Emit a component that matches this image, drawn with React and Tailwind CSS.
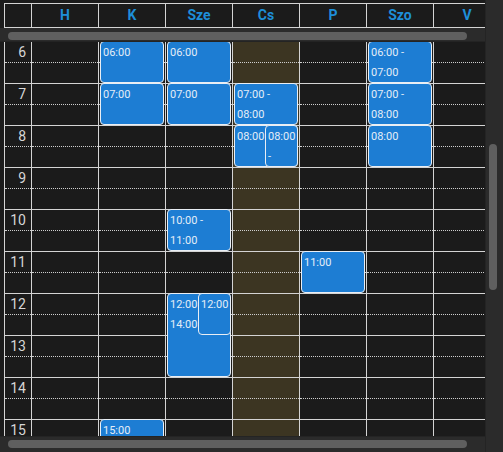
import React from "react";

const days = ["H", "K", "Sze", "Cs", "P", "Szo", "V"];
const hours = [6, 7, 8, 9, 10, 11, 12, 13, 14, 15];

const events = {
  1: [
    { start: 6, dur: 1, text: ["06:00"] },
    { start: 7, dur: 1, text: ["07:00"] },
    { start: 15, dur: 1, text: ["15:00"] },
  ],
  2: [
    { start: 6, dur: 1, text: ["06:00"] },
    { start: 7, dur: 1, text: ["07:00"] },
    { start: 10, dur: 1, text: ["10:00 -", "11:00"] },
    { start: 12, dur: 2, text: ["12:00 -", "14:00"] },
    { start: 12, dur: 1, text: ["12:00"], half: true },
  ],
  3: [
    { start: 7, dur: 1, text: ["07:00 -", "08:00"] },
    { start: 8, dur: 1, text: ["08:00 -"] },
    { start: 8, dur: 1, text: ["08:00", "-"], half: true },
  ],
  4: [{ start: 11, dur: 1, text: ["11:00"] }],
  5: [
    { start: 6, dur: 1, text: ["06:00 -", "07:00"] },
    { start: 7, dur: 1, text: ["07:00 -", "08:00"] },
    { start: 8, dur: 1, text: ["08:00"] },
  ],
};

function Event({ ev }) {
  const top = 42 * (ev.start - 6) - 1;
  const height = 42 * ev.dur;
  return (
    <div
      className={
        "absolute overflow-hidden rounded-[4px] border border-[#e9eef4] bg-[#1d7dd3] pl-[2px] pt-[1px] text-[11px] leading-[20px] text-[#e4edf7] " +
        (ev.half ? "left-[32px] w-[33px]" : "left-[1px] w-[64px]")
      }
      style={{ top, height }}
    >
      {ev.text.map((t, i) => (
        <div key={i} className="whitespace-nowrap">
          {t}
        </div>
      ))}
    </div>
  );
}

export default function App() {
  return (
    <div
      className="flex h-[452px] w-[503px] overflow-hidden bg-[#1b1b1b]"
      style={{ fontFamily: "Roboto, 'Liberation Sans', sans-serif" }}
    >
      <div className="flex w-[485px] shrink-0 flex-col overflow-hidden">
        {/* header */}
        <div className="mt-[3px] h-[25px] shrink-0 overflow-hidden">
          <div className="ml-[4px] flex h-[25px] w-[496px] border-y border-[#d4d4d4]">
            <div className="w-[27px] shrink-0 border-l border-[#d4d4d4]" />
            {days.map((d) => (
              <div
                key={d}
                className="flex w-[67px] shrink-0 items-center justify-center border-l border-[#d4d4d4] text-[14px] font-bold text-[#1e8ed8]"
              >
                {d}
              </div>
            ))}
          </div>
        </div>
        {/* top scroll track */}
        <div className="h-[14px] shrink-0 border-b border-[#242424] bg-[#2b2b2b] pl-[8px] pt-[4px]">
          <div className="h-[8px] w-[459px] rounded-full bg-[#5f5f5f]" />
        </div>
        {/* body */}
        <div className="h-[394px] shrink-0 overflow-hidden">
          <div className="ml-[4px] flex w-[496px]">
            <div className="w-[27px] shrink-0 border-l border-[#d4d4d4]">
              {hours.map((h) => (
                <div key={h} className="h-[42px] border-b border-[#d4d4d4]">
                  <div className="flex h-[21px] items-center justify-end border-b border-dotted border-[#cfcfcf] pr-[5px] text-[14px] text-[#d6d6d6]">
                    {h}
                  </div>
                </div>
              ))}
            </div>
            {days.map((d, di) => (
              <div
                key={d}
                className={
                  "relative w-[67px] shrink-0 border-l border-[#d4d4d4] " +
                  (di === 3 ? "bg-[#3c3522]" : "")
                }
              >
                {hours.map((h) => (
                  <div key={h} className="h-[42px] border-b border-[#d4d4d4]">
                    <div className="h-[21px] border-b border-dotted border-[#cfcfcf]" />
                  </div>
                ))}
                {(events[di] || []).map((ev, i) => (
                  <Event key={i} ev={ev} />
                ))}
              </div>
            ))}
          </div>
        </div>
        {/* bottom scroll track */}
        <div className="h-[16px] shrink-0 border-t border-[#242424] bg-[#2b2b2b] pl-[8px] pt-[3px]">
          <div className="h-[8px] w-[459px] rounded-full bg-[#5f5f5f]" />
        </div>
      </div>
      <div className="flex w-[18px] shrink-0 flex-col border-l border-[#242424] bg-[#2b2b2b] pl-[3px] pt-[144px]">
        <div className="h-[146px] w-[8px] rounded-full bg-[#5f5f5f]" />
      </div>
    </div>
  );
}
